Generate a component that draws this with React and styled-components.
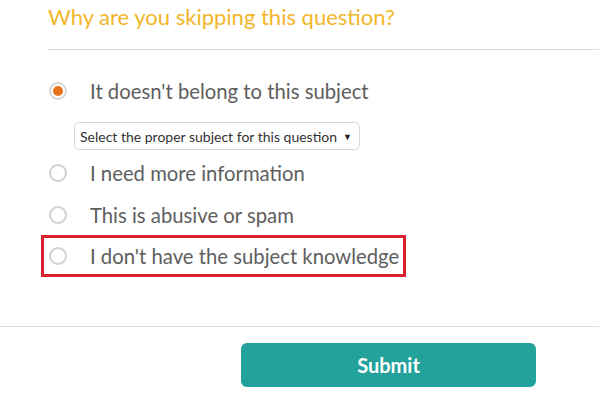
import React from "react";
import styled, { createGlobalStyle } from "styled-components";

const Global = createGlobalStyle`
  html, body { margin: 0; padding: 0; background: #fff; }
  body { font-family: Lato, "Open Sans", sans-serif; }
`;

const Page = styled.div`
  width: 599px;
  height: 397px;
  display: flex;
  flex-direction: column;
  overflow: hidden;
`;

const Header = styled.div`
  margin-left: 48px;
  height: 49px;
  border-bottom: 1px solid #dcdcdc;
  display: flex;
  align-items: flex-start;
`;

const Title = styled.h2`
  margin: 3px 0 0;
  font-size: 22px;
  font-weight: 400;
  line-height: 28px;
  color: #f2b62a;
`;

const Options = styled.div`
  padding: 20px 0 0 48px;
  display: flex;
  flex-direction: column;
  align-items: flex-start;
  height: 256px;
`;

const Row = styled.label`
  display: flex;
  align-items: center;
  height: ${(p) => p.$h || 42}px;
  padding-left: 1px;
  box-sizing: border-box;
  ${(p) =>
    p.$highlight &&
    `
    margin-left: -7px;
    padding: 0 4px 0 5px;
    border: 3px solid #d8202e;
  `}
`;

const Radio = styled.span`
  width: 18px;
  height: 18px;
  box-sizing: border-box;
  border-radius: 50%;
  border: 2px solid ${(p) => (p.$checked ? "#d6d6d6" : "#d0d0d0")};
  display: flex;
  align-items: center;
  justify-content: center;
  flex-shrink: 0;
  &::after {
    content: "";
    display: ${(p) => (p.$checked ? "block" : "none")};
    width: 10px;
    height: 10px;
    border-radius: 50%;
    background: #e8731b;
  }
`;

const Label = styled.span`
  margin-left: 23px;
  font-size: 20.3px;
  color: #5e5e5e;
  white-space: nowrap;
`;

const SelectBox = styled.div`
  margin: 10px 0 2px 26px;
  height: 28px;
  box-sizing: border-box;
  padding: 0 7px 0 5px;
  border: 1px solid #d9d9d9;
  border-radius: 5px;
  display: flex;
  align-items: center;
  gap: 6px;
  font-size: 14px;
  color: #333;
`;

const Caret = styled.span`
  font-size: 9px;
  color: #222;
`;

const Footer = styled.div`
  border-top: 1px solid #dedede;
  padding: 16px 0 0 241px;
`;

const SubmitButton = styled.button`
  width: 295px;
  height: 44px;
  border: none;
  border-radius: 6px;
  background: #22a29a;
  color: #fff;
  font-family: Lato, sans-serif;
  font-weight: 700;
  font-size: 20px;
  cursor: pointer;
`;

const options = [
  { text: "I need more information" },
  { text: "This is abusive or spam", h: 41 },
  { text: "I don't have the subject knowledge", highlight: true },
];

export default function App() {
  return (
    <>
      <Global />
      <Page>
        <Header>
          <Title>Why are you skipping this question?</Title>
        </Header>
        <Options>
          <Row>
            <Radio $checked />
            <Label>It doesn't belong to this subject</Label>
          </Row>
          <SelectBox>
            <span>Select the proper subject for this question</span>
            <Caret>▼</Caret>
          </SelectBox>
          {options.map((o) => (
            <Row key={o.text} $highlight={o.highlight} $h={o.h}>
              <Radio />
              <Label>{o.text}</Label>
            </Row>
          ))}
        </Options>
        <Footer>
          <SubmitButton>Submit</SubmitButton>
        </Footer>
      </Page>
    </>
  );
}
